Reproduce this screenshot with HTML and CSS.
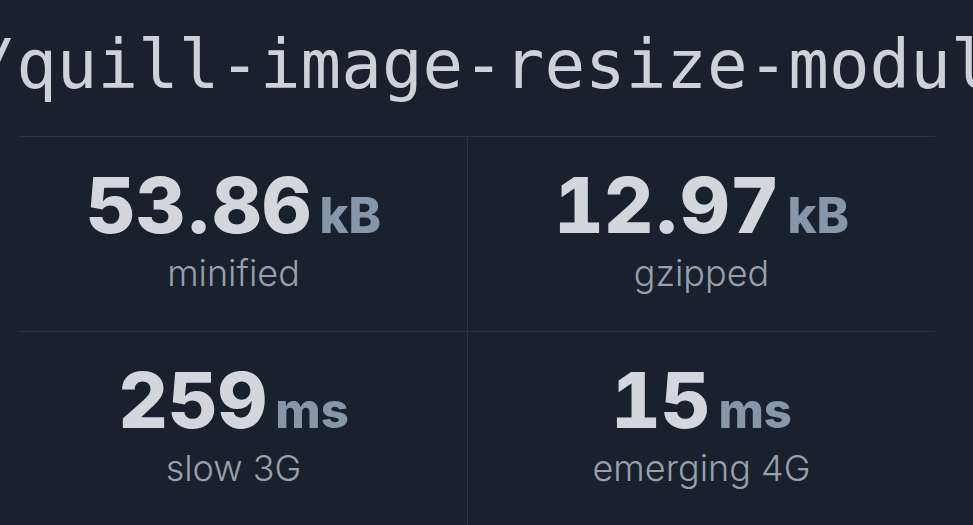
FILE: index.html
```html
<!DOCTYPE html>
<html lang="en">
<head>
<meta charset="utf-8">
<title>quill-image-resize-module</title>
<link rel="stylesheet" href="styles.css">
</head>
<body>
<main class="page">
  <h1 class="title">/quill-image-resize-module</h1>
  <section class="stats">
    <div class="row">
      <div class="cell cell-left">
        <div class="value"><span class="num">53<span class="dot">.</span>86</span><span class="unit">kB</span></div>
        <div class="label">minified</div>
      </div>
      <div class="cell cell-right">
        <div class="value"><span class="num">12<span class="dot">.</span>97</span><span class="unit">kB</span></div>
        <div class="label">gzipped</div>
      </div>
    </div>
    <div class="row">
      <div class="cell cell-left">
        <div class="value"><span class="num">259</span><span class="unit">ms</span></div>
        <div class="label">slow 3G</div>
      </div>
      <div class="cell cell-right">
        <div class="value"><span class="num">15</span><span class="unit">ms</span></div>
        <div class="label">emerging 4G</div>
      </div>
    </div>
  </section>
</main>
</body>
</html>
```

FILE: styles.css
```css
html, body {
  margin: 0;
  padding: 0;
  background: #18212d;
  overflow: hidden;
}

.page {
  width: 973px;
  height: 525px;
  padding-top: 25px;
  box-sizing: border-box;
  overflow: hidden;
}

.title {
  margin: 0 0 31px -24.5px;
  font-family: "DejaVu Sans Mono", monospace;
  font-weight: 400;
  font-size: 67.5px;
  line-height: 80px;
  color: #cdd2d9;
  white-space: nowrap;
}

.stats {
  width: 916px;
  margin-left: 19px;
}

.row {
  display: grid;
  grid-template-columns: 449px 467px;
  border-top: 1px solid #2b3542;
}

.cell {
  display: flex;
  flex-direction: column;
  align-items: center;
  padding: 30px 0 40px;
}

.cell-left {
  padding-right: 19px;
  border-right: 1px solid #2b3542;
}

.value {
  display: flex;
  align-items: baseline;
  font-family: "Inter", "Liberation Sans", sans-serif;
  font-weight: 800;
  line-height: 1;
  font-variant-numeric: tabular-nums;
}

.num {
  font-size: 77px;
  line-height: 77px;
  color: #d3d7dd;
}

.dot {
  margin: 0 3px;
}

.unit {
  margin-left: 8px;
  font-size: 49px;
  color: #8796a8;
}

.label {
  margin-top: 11px;
  font-family: "Inter", "Liberation Sans", sans-serif;
  font-weight: 300;
  font-size: 36px;
  line-height: 36px;
  color: #97a0ab;
}
```
